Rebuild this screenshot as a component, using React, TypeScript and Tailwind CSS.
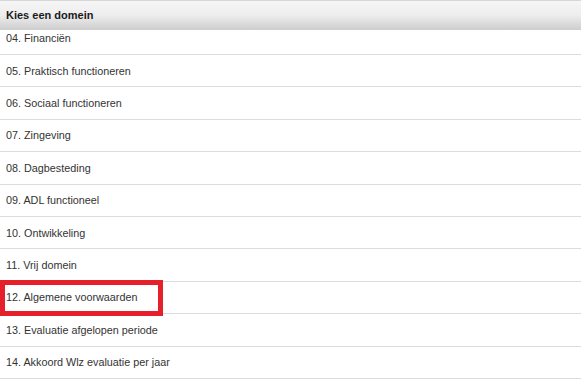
import React from "react";

const rows = [
  "04. Financiën",
  "05. Praktisch functioneren",
  "06. Sociaal functioneren",
  "07. Zingeving",
  "08. Dagbesteding",
  "09. ADL functioneel",
  "10. Ontwikkeling",
  "11. Vrij domein",
  "12. Algemene voorwaarden",
  "13. Evaluatie afgelopen periode",
  "14. Akkoord Wlz evaluatie per jaar",
];

export default function App() {
  return (
    <div
      className="w-[581px] h-[381px] bg-white overflow-hidden flex flex-col"
      style={{ fontFamily: '"Liberation Sans", Arial, sans-serif' }}
    >
      <div className="h-[30px] shrink-0 border-t border-[#d6d6d6] bg-gradient-to-b from-[#f6f6f6] via-[#ededed] to-[#cdcdcd] flex items-center px-[6px] relative z-10">
        <span className="text-[11px] font-bold text-[#1a1a1a]">Kies een domein</span>
      </div>
      <div className="flex-1 overflow-hidden">
        <div className="-mt-[7.4px] flex flex-col">
          {rows.map((r, i) => (
            <div
              key={r}
              className="relative h-[32.4px] shrink-0 border-b border-[#dcdcdc] flex items-center px-[6px] text-[10.8px] text-[#333333]"
            >
              {r}
              {i === 8 && (
                <div className="absolute left-0 top-[-2px] w-[163px] h-[36px] border-[5px] border-[#e5202b]" />
              )}
            </div>
          ))}
        </div>
      </div>
    </div>
  );
}
